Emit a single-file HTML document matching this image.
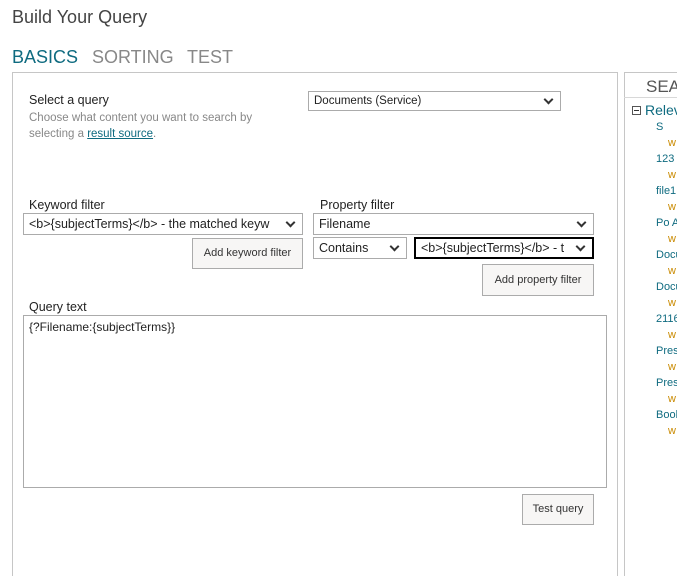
<!DOCTYPE html>
<html><head><style>
*{box-sizing:border-box;margin:0;padding:0}
html,body{width:677px;height:576px;overflow:hidden}
body{background:#fff;font-family:"Liberation Sans",sans-serif;color:#333;position:relative}
.a{position:absolute;white-space:nowrap}
.sel{position:absolute;border:1px solid #ababab;background:#fff;font-size:12.5px;color:#222;padding:0 0 0 5px;overflow:hidden;white-space:nowrap}
.sel:after{content:"";position:absolute;right:8px;top:50%;margin-top:-5px;width:5px;height:5px;border-right:2px solid #333;border-bottom:2px solid #333;transform:rotate(45deg)}
.btn{position:absolute;border:1px solid #ababab;background:#f7f6f5;font-size:11px;color:#333;text-align:center}
.r{position:absolute;font-size:11px;white-space:nowrap}
</style></head><body>
<div class="a" style="left:12px;top:7px;font-size:18px;color:#444">Build Your Query</div>
<div class="a" style="left:12px;top:47px;font-size:18px;color:#0f6b80">BASICS</div>
<div class="a" style="left:92px;top:47px;font-size:18px;color:#888">SORTING</div>
<div class="a" style="left:187px;top:47px;font-size:18px;color:#888">TEST</div>
<div class="a" style="left:12px;top:72px;width:606px;height:504px;border:1px solid #c6c6c6;border-bottom:none"></div>
<div class="a" style="left:624px;top:72px;width:53px;height:504px;border:1px solid #c6c6c6;border-bottom:none;border-right:none"></div>
<div class="a" style="left:624px;top:97px;width:53px;border-top:1px solid #d8d8d8"></div>
<div class="a" style="left:646px;top:77px;font-size:17px;color:#555">SEA</div>
<div class="a" style="left:29px;top:93px;font-size:12.5px;color:#222">Select a query</div>
<div class="a" style="left:29px;top:110px;font-size:11.5px;color:#888;line-height:16px">Choose what content you want to search by<br>selecting a <span style="color:#0f6b80;text-decoration:underline">result source</span>.</div>
<div class="sel" style="left:308px;top:91px;width:253px;height:20px;line-height:18px;font-size:11.5px">Documents (Service)</div>
<div class="a" style="left:29px;top:198px;font-size:12.5px;color:#222">Keyword filter</div>
<div class="sel" style="left:23px;top:213px;width:280px;height:22px;line-height:20px;padding-right:20px">&lt;b&gt;{subjectTerms}&lt;/b&gt; - the matched keyw</div>
<div class="btn" style="left:192px;top:238px;width:111px;height:31px;line-height:29px">Add keyword filter</div>
<div class="a" style="left:320px;top:198px;font-size:12.5px;color:#222">Property filter</div>
<div class="sel" style="left:313px;top:213px;width:281px;height:22px;line-height:20px">Filename</div>
<div class="sel" style="left:313px;top:237px;width:94px;height:22px;line-height:20px">Contains</div>
<div class="sel" style="left:414px;top:237px;width:180px;height:22px;line-height:18px;border:2px solid #000;padding-right:20px">&lt;b&gt;{subjectTerms}&lt;/b&gt; - t</div>
<div class="btn" style="left:482px;top:264px;width:112px;height:32px;line-height:30px">Add property filter</div>
<div class="a" style="left:29px;top:300px;font-size:12.5px;color:#222">Query text</div>
<div class="a" style="left:23px;top:315px;width:584px;height:173px;border:1px solid #ababab"></div>
<div class="a" style="left:29px;top:320px;font-size:12px;color:#222">{?Filename:{subjectTerms}}</div>
<div class="btn" style="left:522px;top:494px;width:72px;height:31px;line-height:29px">Test query</div>
<div class="a" style="left:632px;top:106px;width:9px;height:9px;border:1px solid #555;font-size:0"><div style="margin:3px 1px;height:1px;background:#333"></div></div>
<div class="r" style="left:645px;top:102px;font-size:14px;color:#0f6b80">Relev</div>
<div class="r" style="left:656px;top:121px;color:#0f6b80">S</div>
<div class="r" style="left:668px;top:137px;color:#c98a00">w</div>
<div class="r" style="left:656px;top:153px;color:#0f6b80">123</div>
<div class="r" style="left:668px;top:169px;color:#c98a00">w</div>
<div class="r" style="left:656px;top:185px;color:#0f6b80">file1</div>
<div class="r" style="left:668px;top:201px;color:#c98a00">w</div>
<div class="r" style="left:656px;top:217px;color:#0f6b80">Po A</div>
<div class="r" style="left:668px;top:233px;color:#c98a00">w</div>
<div class="r" style="left:656px;top:249px;color:#0f6b80">Docu</div>
<div class="r" style="left:668px;top:265px;color:#c98a00">w</div>
<div class="r" style="left:656px;top:281px;color:#0f6b80">Docu</div>
<div class="r" style="left:668px;top:297px;color:#c98a00">w</div>
<div class="r" style="left:656px;top:313px;color:#0f6b80">2116</div>
<div class="r" style="left:668px;top:329px;color:#c98a00">w</div>
<div class="r" style="left:656px;top:345px;color:#0f6b80">Pres</div>
<div class="r" style="left:668px;top:361px;color:#c98a00">w</div>
<div class="r" style="left:656px;top:377px;color:#0f6b80">Pres</div>
<div class="r" style="left:668px;top:393px;color:#c98a00">w</div>
<div class="r" style="left:656px;top:409px;color:#0f6b80">Bool</div>
<div class="r" style="left:668px;top:425px;color:#c98a00">w</div>
</body></html>
